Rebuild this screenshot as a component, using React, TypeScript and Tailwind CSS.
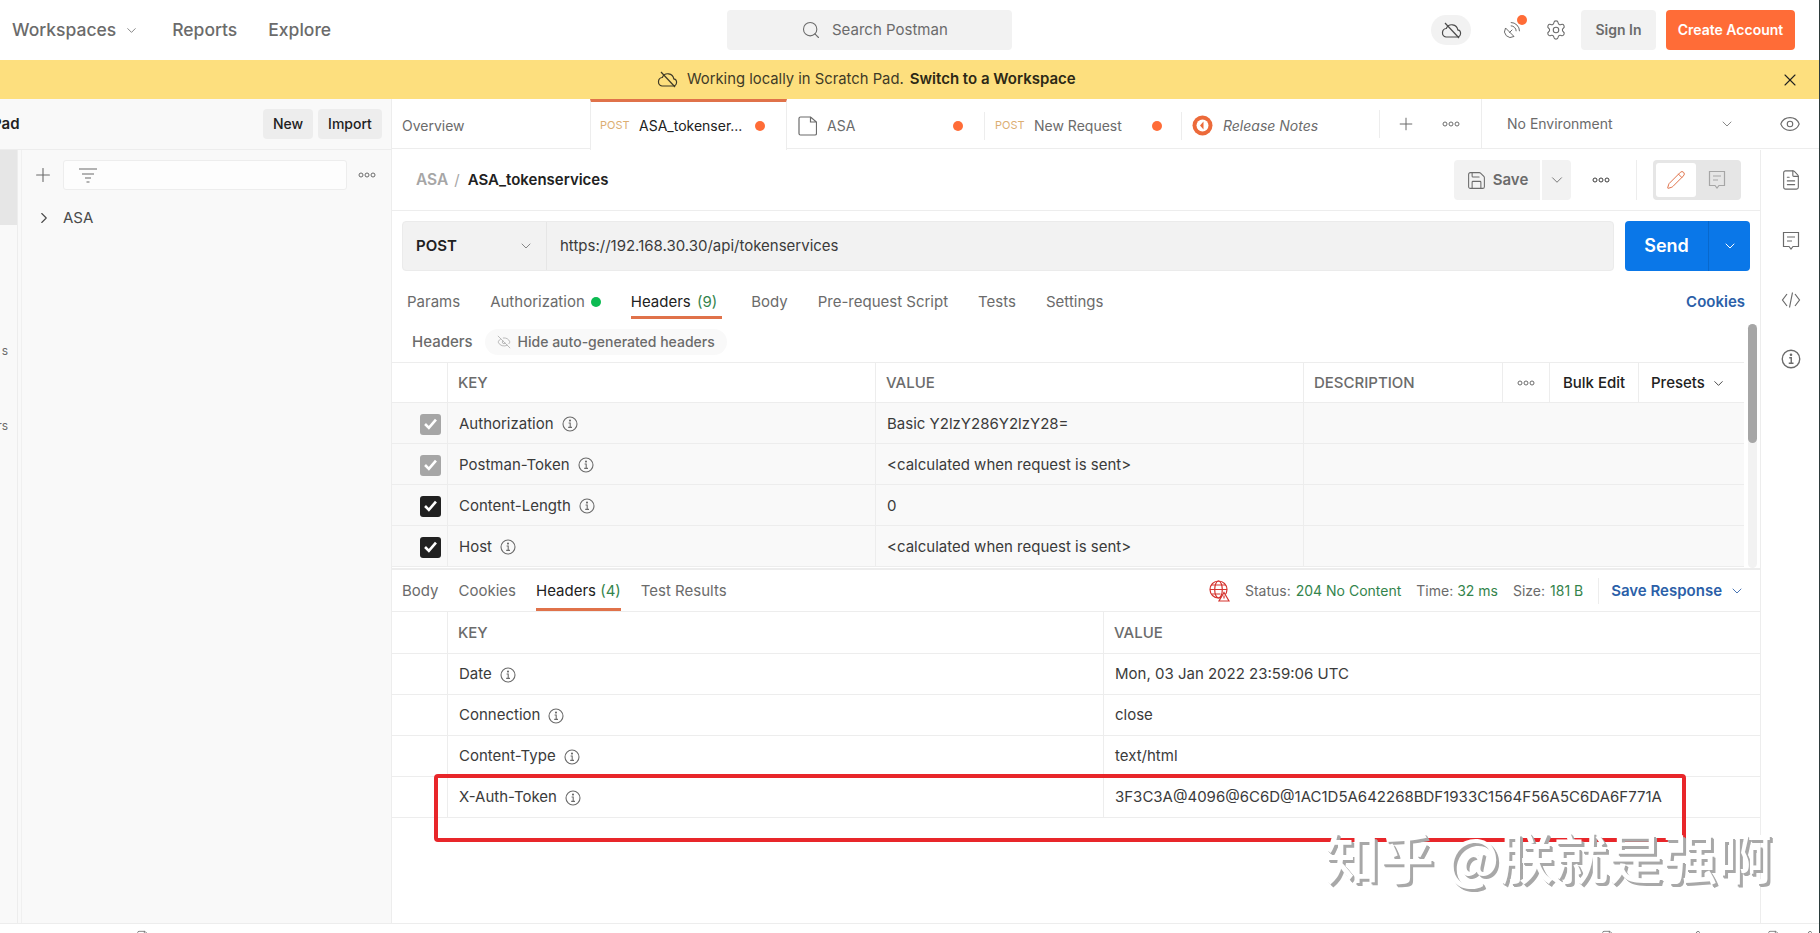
import { ChevronDown, ChevronRight, EyeOff, Eye, FileText, Pencil, Plus, Save, Search, SatelliteDish, Settings, X } from 'lucide-react';

function Dots({ className = 'text-[#6b6b6b]' }: { className?: string }) {
  return (
    <svg className={className} width="18" height="6" viewBox="0 0 18 6" fill="none" stroke="currentColor" strokeWidth="1">
      <circle cx="3" cy="3" r="2" />
      <circle cx="9" cy="3" r="2" />
      <circle cx="15" cy="3" r="2" />
    </svg>
  );
}

function InfoIcon({ size = 16 }: { size?: number }) {
  return (
    <svg width={size} height={size} viewBox="0 0 16 16" fill="none" stroke="#6b6b6b" strokeWidth="1.1" className="shrink-0">
      <circle cx="8" cy="8" r="7" />
      <path d="M6.6 7h1.6v4.2M6.2 11.4h3.8" />
      <circle cx="8" cy="4.6" r=".5" fill="#6b6b6b" />
    </svg>
  );
}

function CloudSlash({ className = '' }: { className?: string }) {
  return (
    <svg className={className} width="21" height="19" viewBox="0 0 21 19" fill="none" stroke="currentColor" strokeWidth="1.2">
      <path d="M5 16h11a3.600 3.600 0 0 0 .8-7.100A6 6 0 0 0 5.300 7.500 4.300 4.300 0 0 0 5 16z" />
      <path d="M4 2l14 15" />
    </svg>
  );
}

function CommentIcon({ className = '' }: { className?: string }) {
  return (
    <svg className={className} width="18" height="20" viewBox="0 0 18 20" fill="none" stroke="currentColor" strokeWidth="1.2">
      <path d="M1.500 1.500h15v14h-5.500l-2 2.500-2-2.500h-5.500z" />
      <path d="M5 6h8M5 10h5" />
    </svg>
  );
}

function CheckBox({ dark }: { dark: boolean }) {
  return (
    <div className={dark ? 'w-[21px] h-[21px] rounded-[3px] bg-[#212121] flex items-center justify-center' : 'w-[21px] h-[21px] rounded-[3px] bg-[#a6a6a6] flex items-center justify-center'}>
      <svg width="15" height="12" viewBox="0 0 13 11" fill="none" stroke="#fff" strokeWidth="2.400">
        <path d="M1.500 5.500l3.500 3.500 6.500-7.500" />
      </svg>
    </div>
  );
}

function OrangeDot() {
  return <div className="w-[10px] h-[10px] rounded-full bg-[#ff6c37]" />;
}

function TabSep() {
  return <div className="w-px h-[28px] bg-[#ededed] -ml-[11px] mr-[10px]" />;
}

const reqRows = [
  { key: 'Authorization', value: 'Basic Y2lzY286Y2lzY28=', dark: false },
  { key: 'Postman-Token', value: '<calculated when request is sent>', dark: false },
  { key: 'Content-Length', value: '0', dark: true },
  { key: 'Host', value: '<calculated when request is sent>', dark: true },
];

const resRows = [
  { key: 'Date', value: 'Mon, 03 Jan 2022 23:59:06 UTC' },
  { key: 'Connection', value: 'close' },
  { key: 'Content-Type', value: 'text/html' },
  { key: 'X-Auth-Token', value: '3F3C3A@4096@6C6D@1AC1D5A642268BDF1933C1564F56A5C6DA6F771A' },
];

export default function App() {
  return (
    <div className="relative w-[1820px] h-[933px] overflow-hidden flex flex-col bg-white font-[Inter,sans-serif] text-[15px] text-[#3b3b3b]">
      {/* top bar */}
      <div className="h-[60px] shrink-0 flex items-center text-[#6b6b6b]">
        <div className="w-[727px] flex items-center pl-[12px]">
          <span className="text-[17.5px] font-medium">Workspaces</span>
          <ChevronDown size={15} className="ml-[8px]" strokeWidth={1.3} />
          <span className="ml-[33px] text-[17.5px] font-medium">Reports</span>
          <span className="ml-[31px] text-[17.5px] font-medium">Explore</span>
        </div>
        <div className="w-[285px] h-[40px] rounded bg-[#f2f2f2] flex items-center pl-[74px]">
          <Search size={20} strokeWidth={1.3} />
          <span className="ml-[11px] text-[15px]">Search Postman</span>
        </div>
        <div className="flex-1 flex items-center justify-end pr-[25px]">
          <div className="w-[40px] h-[30px] rounded-full bg-[#f2f2f2] flex items-center justify-center">
            <CloudSlash className="text-[#4b4b4b]" />
          </div>
          <div className="relative ml-[31px]">
            <SatelliteDish size={20} strokeWidth={1.2} />
            <div className="absolute -top-[5px] -right-[5px] w-[10px] h-[10px] rounded-full bg-[#ff6c37]" />
          </div>
          <Settings size={22} strokeWidth={1.2} className="ml-[23px]" />
          <div className="ml-[14px] w-[75px] h-[40px] rounded bg-[#f2f2f2] flex items-center justify-center text-sm font-semibold">Sign In</div>
          <div className="ml-[10px] w-[129px] h-[40px] rounded bg-[#ff6c37] flex items-center justify-center text-sm text-white font-semibold">Create Account</div>
        </div>
      </div>

      {/* banner */}
      <div className="h-[39px] shrink-0 bg-[#fddf7e] flex items-center pl-[657px] text-[#3f3a26]">
        <CloudSlash />
        <span className="ml-[9px] text-[14.8px]">Working locally in Scratch Pad.</span>
        <span className="ml-[6px] text-[15px] font-semibold text-[#2c2815]">Switch to a Workspace</span>
        <X size={20} strokeWidth={1.3} className="ml-auto mr-[20px] text-[#212121]" />
      </div>

      <div className="flex-1 flex min-h-0">
        {/* sidebar */}
        <div className="w-[392px] shrink-0 flex flex-col bg-[#f9f9f9] border-r border-[#ededed]">
          <div className="h-[51px] shrink-0 flex items-center border-b border-[#ededed] pr-[9px]">
            <span className="-ml-[8px] text-[15px] font-semibold text-[#212121]">Pad</span>
            <div className="ml-auto w-[50px] h-[30px] rounded bg-[#ededed] flex items-center justify-center text-sm font-medium text-[#212121]">New</div>
            <div className="ml-[5px] w-[64px] h-[30px] rounded bg-[#ededed] flex items-center justify-center text-sm font-medium text-[#212121]">Import</div>
          </div>
          <div className="flex-1 flex min-h-0">
            <div className="w-[18px] shrink-0 border-r border-[#ededed] flex flex-col text-xs text-[#6b6b6b]">
              <div className="h-[75px] bg-[#e6e6e6]" />
              <div className="mt-[118px] w-[8px] flex justify-end whitespace-nowrap">s</div>
              <div className="mt-[59px] w-[8px] flex justify-end whitespace-nowrap">rs</div>
            </div>
            <div className="w-[4px] shrink-0 border-r border-[#f0f0f0]" />
            <div className="flex-1 flex flex-col">
              <div className="mt-[10px] h-[30px] flex items-center">
                <Plus size={22} strokeWidth={1.2} className="ml-[10px] text-[#6b6b6b]" />
                <div className="ml-[9px] w-[284px] h-[30px] rounded-[3px] bg-white/60 border border-[#ededed] flex items-center pl-[14px]">
                  <svg width="20" height="16" viewBox="0 0 20 16" fill="none" stroke="#6b6b6b" strokeWidth="1.200">
                    <path d="M1 2h18M4 7h12M7 11h6M8.500 15h3" />
                  </svg>
                </div>
                <Dots className="ml-[11px] text-[#6b6b6b]" />
              </div>
              <div className="mt-[13px] h-[30px] flex items-center">
                <ChevronRight size={18} strokeWidth={1.5} className="ml-[13px] text-[#4b4b4b]" />
                <span className="ml-[10px] text-[#4b4b4b]">ASA</span>
              </div>
            </div>
          </div>
        </div>

        {/* main */}
        <div className="flex-1 min-w-0 flex flex-col">
          {/* tab strip */}
          <div className="h-[51px] shrink-0 flex items-start text-sm text-[#6b6b6b]">
            <div className="w-[198px] h-[50px] flex items-center pt-[4px] pl-[10px] border-b border-[#ededed]">Overview</div>
            <div className="w-[197px] h-[51px] flex items-center pl-[9px] bg-white border-t-[3px] border-t-[#e0724a] border-x border-x-[#ededed]">
              <span className="w-[39px] text-[11px] text-[#dcae72]">POST</span>
              <span className="w-[116px] text-[#212121]">ASA_tokenser...</span>
              <OrangeDot />
            </div>
            <div className="h-[50px] flex items-center w-[197px] pt-[4px] pl-[11px] border-b border-[#ededed]">
              <svg width="19" height="20" viewBox="0 0 19 20" fill="none" stroke="#6b6b6b" strokeWidth="1.200">
                <path d="M2.500 1h10v5h5.500M12.500 1l6 5v11.500a1.500 1.500 0 0 1-1.500 1.500H2.500A1.500 1.500 0 0 1 1 17.500V2.500A1.500 1.500 0 0 1 2.500 1" />
              </svg>
              <span className="ml-[10px] w-[126px]">ASA</span>
              <OrangeDot />
            </div>
            <div className="h-[50px] w-[197px] flex items-center pt-[4px] pl-[11px] border-b border-[#ededed]">
              <TabSep />
              <span className="w-[39px] text-[11px] text-[#dcae72]">POST</span>
              <span className="w-[118px]">New Request</span>
              <OrangeDot />
            </div>
            <div className="h-[50px] w-[198px] flex items-center pt-[4px] pl-[11px] border-b border-[#ededed]">
              <TabSep />
              <svg width="21" height="21" viewBox="0 0 21 21" className="shrink-0">
                <circle cx="10.500" cy="10.500" r="10" fill="#ec6a3a" />
                <circle cx="10.500" cy="10.500" r="6" fill="#fff" />
                <path d="M11.500 6.500l-3.500 4 3.500 4z" fill="#ec6a3a" />
              </svg>
              <span className="ml-[10px] italic">Release Notes</span>
            </div>
            <div className="h-[50px] w-[102px] flex items-center pl-[11px] border-b border-[#ededed]">
              <TabSep />
              <Plus size={20} strokeWidth={1.2} className="ml-[6px]" />
              <Dots className="ml-[26px]" />
            </div>
            <div className="flex-1 h-[50px] flex items-center border-l border-b border-[#ededed]">
              <span className="ml-[25px]">No Environment</span>
              <ChevronDown size={16} strokeWidth={1.2} className="ml-auto mr-[44px]" />
              <Eye size={22} strokeWidth={1.2} className="mr-[19px]" />
            </div>
          </div>

          <div className="flex-1 flex min-h-0">
            <div className="w-[1368px] shrink-0 flex flex-col">
              {/* request */}
              <div className="relative h-[420px] shrink-0 flex flex-col overflow-hidden border-b-2 border-[#ededed]">
                <div className="h-[61px] shrink-0 flex items-center border-b border-[#ededed] pl-[24px] pr-[19px]">
                  <span className="text-[15.5px] font-semibold text-[#a6a6a6]">ASA</span>
                  <span className="ml-[6px] text-[15px] text-[#a6a6a6]">/</span>
                  <span className="ml-[8px] font-semibold text-[#212121]">ASA_tokenservices</span>
                  <div className="ml-auto w-[86px] h-[40px] rounded-l bg-[#f2f2f2] flex items-center justify-center text-[#6b6b6b]">
                    <Save size={21} strokeWidth={1.2} />
                    <span className="ml-[6px] font-semibold">Save</span>
                  </div>
                  <div className="ml-[2px] w-[29px] h-[40px] rounded-r bg-[#f2f2f2] flex items-center justify-center text-[#6b6b6b]">
                    <ChevronDown size={18} strokeWidth={1.2} />
                  </div>
                  <Dots className="ml-[21px]" />
                  <div className="ml-[26px] w-px h-[40px] bg-[#ededed]" />
                  <div className="ml-[16px] w-[88px] h-[40px] rounded bg-[#e6e6e6] flex items-center p-[3px]">
                    <div className="w-[40px] h-[34px] rounded-[3px] bg-white flex items-center justify-center">
                      <Pencil size={20} strokeWidth={1.2} className="text-[#e0724a]" />
                    </div>
                    <CommentIcon className="ml-[12px] text-[#a6a6a6]" />
                  </div>
                </div>

                <div className="mt-[10px] ml-[10px] mr-[10px] flex h-[50px] shrink-0 gap-[11px]">
                  <div className="flex-1 flex rounded bg-[#f2f2f2] border border-[#ebebeb]">
                    <div className="w-[144px] flex items-center pl-[13px] border-r border-[#e6e6e6] font-semibold text-[#212121]">
                      POST
                      <ChevronDown size={16} strokeWidth={1.2} className="ml-auto mr-[12px] text-[#6b6b6b]" />
                    </div>
                    <div className="flex items-center pl-[13px]">https://192.168.30.30/api/tokenservices</div>
                  </div>
                  <div className="w-[125px] flex rounded bg-[#0a77e8] text-white">
                    <div className="w-[84px] flex items-center justify-center text-lg font-semibold border-r border-[#0868cc]">Send</div>
                    <div className="flex-1 flex items-center justify-center"><ChevronDown size={16} strokeWidth={1.5} /></div>
                  </div>
                </div>

                <div className="h-[51px] shrink-0 flex items-start pt-[20px] pl-[15px] pr-[15px] text-[#6b6b6b]">
                  <span>Params</span>
                  <span className="ml-[30px]">Authorization</span>
                  <div className="ml-[6px] mt-[6px] w-[10px] h-[10px] rounded-full bg-[#0cbb52]" />
                  <div className="ml-[30px] relative h-[28px] text-[#212121]">
                    Headers <span className="ml-[2px] text-[#34844c]">(9)</span>
                    <div className="absolute left-0 -right-[5px] bottom-0 h-[3px] bg-[#e0724a]" />
                  </div>
                  <span className="ml-[34px]">Body</span>
                  <span className="ml-[30px]">Pre-request Script</span>
                  <span className="ml-[30px]">Tests</span>
                  <span className="ml-[30px]">Settings</span>
                  <span className="ml-auto font-semibold text-[#2b5fa8]">Cookies</span>
                </div>

                <div className="h-[40px] shrink-0 flex items-center pl-[20px]">
                  <span className="font-medium text-[#6b6b6b]">Headers</span>
                  <div className="ml-[12px] h-[26px] px-[12px] rounded-full bg-[#f9f9f9] flex items-center text-sm font-medium text-[#6b6b6b]">
                    <EyeOff size={14} strokeWidth={1.3} className="text-[#a6a6a6]" />
                    <span className="ml-[7px]">Hide auto-generated headers</span>
                  </div>
                </div>

                <div className="w-[1352px] shrink-0 grid grid-cols-[55px_428px_428px_199px_47px_89px_106px] h-[41px] border-y border-[#ededed] font-medium text-[#6b6b6b]">
                  <div />
                  <div className="border-l border-[#ededed] flex items-center pt-[2px] pl-[10px]">KEY</div>
                  <div className="border-l border-[#ededed] flex items-center pt-[2px] pl-[10px]">VALUE</div>
                  <div className="border-l border-[#ededed] flex items-center pt-[2px] pl-[10px]">DESCRIPTION</div>
                  <div className="border-l border-[#ededed] flex items-center justify-center"><Dots /></div>
                  <div className="border-l border-[#ededed] flex items-center justify-center pt-[2px] text-[#212121]">Bulk Edit</div>
                  <div className="border-l border-[#ededed] flex items-center pt-[2px] pl-[12px] text-[#212121]">
                    Presets
                    <ChevronDown size={15} strokeWidth={1.3} className="ml-[6px]" />
                  </div>
                </div>
                {reqRows.map((r) => (
                  <div key={r.key} className="w-[1352px] shrink-0 grid grid-cols-[55px_428px_428px_199px_1fr] h-[41px] border-b border-[#ededed] bg-[#f9f9f9]">
                    <div className="flex items-center pt-[2px] pl-[28px]"><CheckBox dark={r.dark} /></div>
                    <div className="border-l border-[#ededed] flex items-center pt-[2px] pl-[11px]">
                      {r.key}
                      <span className="ml-[8px]"><InfoIcon /></span>
                    </div>
                    <div className="border-l border-[#ededed] flex items-center pt-[2px] pl-[11px]">{r.value}</div>
                    <div className="border-l border-[#ededed]" />
                    <div />
                  </div>
                ))}
                <div className="absolute right-[3px] top-[174px] bottom-0 w-[9px] rounded-full bg-[#f2f2f2]">
                  <div className="h-[119px] rounded-full bg-[#a6a6a6]" />
                </div>
              </div>

              {/* response */}
              <div className="h-[42px] shrink-0 flex items-start pt-[10px] pl-[10px] border-b border-[#ededed] text-[#6b6b6b]">
                <span>Body</span>
                <span className="ml-[20px]">Cookies</span>
                <div className="ml-[20px] relative h-[31px] text-[#212121]">
                  Headers <span className="text-[#34844c]">(4)</span>
                  <div className="absolute left-0 right-0 bottom-0 h-[3px] bg-[#e0724a]" />
                </div>
                <span className="ml-[20px]">Test Results</span>
                <div className="ml-auto flex items-center pr-[15px] h-[22px] text-sm">
                  <svg width="21" height="22" viewBox="0 0 21 22" fill="none" stroke="#d5342f" strokeWidth="1.200">
                    <circle cx="9.500" cy="9.500" r="8.500" />
                    <ellipse cx="9.500" cy="9.500" rx="3.800" ry="8.500" />
                    <path d="M1 9.500h17M2.500 5h14M2.500 14h9" />
                    <path d="M15 12.500l5 8.500h-10z" fill="#fff" />
                    <path d="M15 15.500v3" />
                  </svg>
                  <span className="ml-[15px]">Status:</span>
                  <span className="ml-[5px] text-[#34844c]">204 No Content</span>
                  <span className="ml-[15px]">Time:</span>
                  <span className="ml-[4px] text-[#34844c]">32 ms</span>
                  <span className="ml-[15px]">Size:</span>
                  <span className="ml-[5px] text-[#34844c]">181 B</span>
                  <div className="ml-[15px] w-px h-[26px] bg-[#ededed]" />
                  <span className="ml-[12px] text-[15px] font-semibold text-[#2b5fa8]">Save Response</span>
                  <ChevronDown size={16} strokeWidth={1.3} className="ml-[7px] text-[#2b5fa8]" />
                </div>
              </div>
              <div className="h-[42px] shrink-0 grid grid-cols-[55px_656px_1fr] border-b border-[#ededed] font-medium text-[#6b6b6b]">
                <div />
                <div className="border-l border-[#ededed] flex items-center pt-px pl-[10px]">KEY</div>
                <div className="border-l border-[#ededed] flex items-center pt-px pl-[10px]">VALUE</div>
              </div>
              {resRows.map((r) => (
                <div key={r.key} className="h-[41px] shrink-0 grid grid-cols-[55px_656px_1fr] border-b border-[#ededed]">
                  <div />
                  <div className="border-l border-[#ededed] flex items-center pt-px pl-[11px]">
                    {r.key}
                    <span className="ml-[8px]"><InfoIcon /></span>
                  </div>
                  <div className="border-l border-[#ededed] flex items-center pt-px pl-[11px]">{r.value}</div>
                </div>
              ))}
            </div>

            {/* right rail */}
            <div className="flex-1 border-l border-[#ededed] flex flex-col items-center pt-[19px] text-[#6b6b6b]">
              <FileText size={22} strokeWidth={1.2} />
              <CommentIcon className="mt-[40px]" />
              <svg className="mt-[40px]" width="20" height="18" viewBox="0 0 20 18" fill="none" stroke="currentColor" strokeWidth="1.200">
                <path d="M6 3L1.500 9 6 15M14 3l4.500 6-4.500 6M11.500 1.500l-3 15" />
              </svg>
              <span className="mt-[40px]"><InfoIcon size={20} /></span>
            </div>
          </div>
        </div>
      </div>

      {/* status bar, cut off by the window */}
      <div className="h-[10px] shrink-0 border-t border-[#ededed] overflow-hidden flex items-start text-[#6b6b6b]">
        <FileText size={16} strokeWidth={1.2} className="ml-[135px] mt-[6px]" />
        <FileText size={16} strokeWidth={1.2} className="ml-[1449px] mt-[6px]" />
        <Settings size={16} strokeWidth={1.2} className="ml-[74px] mt-[6px]" />
        <FileText size={16} strokeWidth={1.2} className="ml-[60px] mt-[6px]" />
        <Settings size={16} strokeWidth={1.2} className="ml-[20px] mt-[6px]" />
      </div>

      {/* annotation + watermark on top of the shot */}
      <div className="absolute left-[434px] top-[774px] w-[1252px] h-[68px] rounded border-4 border-[#e8262a]" />
      <div className="absolute left-[1325px] top-[821px] whitespace-nowrap text-[54.5px] leading-[70px] font-medium font-['Noto_Sans_CJK_SC',sans-serif] text-white [text-shadow:2px_2px_0_#a8a8a8,3px_3px_0_#a8a8a8]">
        知乎 @朕就是强啊
      </div>
      <div className="absolute right-0 top-0 bottom-0 w-px bg-[#2b3a3a]" />
    </div>
  );
}
